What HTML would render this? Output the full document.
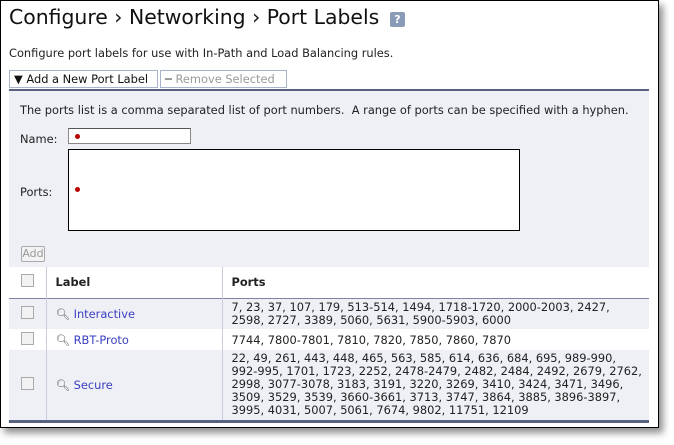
<!DOCTYPE html>
<html><head><style>
*{margin:0;padding:0;box-sizing:border-box}
body{width:674px;height:445px;background:#fff;font-family:"DejaVu Sans","Liberation Sans",sans-serif;font-size:11.4px;color:#222;position:relative;overflow:hidden}
.frame{position:absolute;left:0;top:0;width:659px;height:428px;border:1px solid #000;background:#fff;box-shadow:4px 5px 7px rgba(0,0,0,.45)}
.a{position:absolute;white-space:nowrap}
h1{position:absolute;left:9px;top:5px;font-weight:normal;font-size:20.4px;color:#111;white-space:nowrap}
.q{position:absolute;left:390px;top:12px;width:15px;height:15px;background:#8a9bb8;color:#fff;font-size:11px;font-weight:bold;text-align:center;line-height:15px;border-radius:2px}
.btn{position:absolute;top:70px;height:18px;border:1px solid #a9b4cc;background:#fff;line-height:16px;padding:0 4px;font-size:11.4px;white-space:nowrap}
.panel{position:absolute;left:9px;top:89px;width:640px;height:178px;background:#eef0f5;border-top:2px solid #5a6282}
.in{position:absolute;background:#fff;border:1px solid #888;border-top-color:#555}
.dot{position:absolute;width:5px;height:5px;border-radius:50%;background:#b00}
.tbl{position:absolute;left:9px;top:267px;width:640px;border-collapse:collapse}
.tbl td,.tbl th{font-size:11.4px;vertical-align:middle;text-align:left}
.cb{display:inline-block;width:13px;height:13px;border:1px solid #aaa;background:#f2f2f2}
.lnk{color:#3a3fc0}
</style></head><body>
<div class="frame"></div>
<h1>Configure › Networking › Port Labels</h1>
<div class="q">?</div>
<div class="a" style="left:9px;top:46px">Configure port labels for use with In-Path and Load Balancing rules.</div>
<div class="btn" style="left:9px;width:149px;color:#111">▼ Add a New Port Label</div>
<div class="btn" style="left:160px;width:127px;color:#999">━ Remove Selected</div>
<div class="panel"></div>
<div class="a" style="left:20px;top:103px">The ports list is a comma separated list of port numbers.&nbsp; A range of ports can be specified with a hyphen.</div>
<div class="a" style="left:20px;top:132px">Name:</div>
<div class="in" style="left:68px;top:128px;width:123px;height:16px"></div>
<div class="dot" style="left:75px;top:134px"></div>
<div class="a" style="left:20px;top:185px">Ports:</div>
<div class="in" style="left:68px;top:149px;width:452px;height:82px;border:1px solid #000"></div>
<div class="dot" style="left:75px;top:187px"></div>
<div class="a" style="left:21px;top:246px;width:24px;height:16px;border:1px solid #aaa;border-radius:2px;color:#999;line-height:14px;text-align:center;font-size:11px;background:#f3f3f3">Add</div>
<table class="tbl">
<tr style="height:31px;background:#fff;border-bottom:1px solid #7a84a3"><th style="width:37px;text-align:center;border-right:1px solid #ccd"><span class="cb"></span></th><th style="width:176px;padding-left:9px;border-right:1px solid #ccd">Label</th><th style="padding-left:9px">Ports</th></tr>
<tr style="height:31px;background:#eef0f5"><td style="text-align:center;border-right:1px solid #ccd"><span class="cb"></span></td><td style="padding-left:9px;border-right:1px solid #ccd"><span style="color:#666">🔍︎</span> <span class="lnk">Interactive</span></td><td style="padding-left:9px;line-height:13px">7, 23, 37, 107, 179, 513-514, 1494, 1718-1720, 2000-2003, 2427,<br>2598, 2727, 3389, 5060, 5631, 5900-5903, 6000</td></tr>
<tr style="height:21px;background:#fff"><td style="text-align:center;border-right:1px solid #ccd"><span class="cb"></span></td><td style="padding-left:9px;border-right:1px solid #ccd"><span style="color:#666">🔍︎</span> <span class="lnk">RBT-Proto</span></td><td style="padding-left:9px">7744, 7800-7801, 7810, 7820, 7850, 7860, 7870</td></tr>
<tr style="height:71px;background:#eef0f5;border-bottom:3px solid #5a6282"><td style="text-align:center;border-right:1px solid #ccd"><span class="cb"></span></td><td style="padding-left:9px;border-right:1px solid #ccd"><span style="color:#666">🔍︎</span> <span class="lnk">Secure</span></td><td style="padding-left:9px;line-height:13px">22, 49, 261, 443, 448, 465, 563, 585, 614, 636, 684, 695, 989-990,<br>992-995, 1701, 1723, 2252, 2478-2479, 2482, 2484, 2492, 2679, 2762,<br>2998, 3077-3078, 3183, 3191, 3220, 3269, 3410, 3424, 3471, 3496,<br>3509, 3529, 3539, 3660-3661, 3713, 3747, 3864, 3885, 3896-3897,<br>3995, 4031, 5007, 5061, 7674, 9802, 11751, 12109</td></tr>
</table>
</body></html>
